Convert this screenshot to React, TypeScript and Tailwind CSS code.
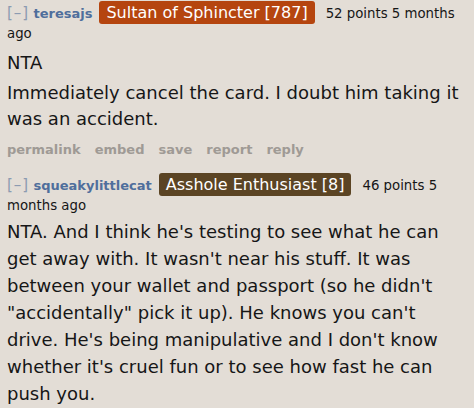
const font = { fontFamily: "Verdana, 'DejaVu Sans', sans-serif" }

type Comment = {
  user: string
  flair: string
  flairBg: string
  points: string
  body: string[]
  bodyClass: string
  links?: boolean
}

const comments: Comment[] = [
  {
    user: "teresajs",
    flair: "Sultan of Sphincter [787]",
    flairBg: "bg-[#b5450f]",
    points: "52 points 5 months ago",
    body: [
      "NTA",
      "Immediately cancel the card. I doubt him taking it was an accident."
    ],
    bodyClass: "mt-[6px] leading-[26px]",
    links: true
  },
  {
    user: "squeakylittlecat",
    flair: "Asshole Enthusiast [8]",
    flairBg: "bg-[#5b4424]",
    points: "46 points 5 months ago",
    body: [
      "NTA. And I think he's testing to see what he can get away with. It wasn't near his stuff. It was between your wallet and passport (so he didn't \"accidentally\" pick it up). He knows you can't drive. He's being manipulative and I don't know whether it's cruel fun or to see how fast he can push you."
    ],
    bodyClass: "mt-[2px] leading-[27px]"
  }
]

export default function App() {
  return (
    <div className="h-[408px] w-[474px] overflow-hidden bg-[#e3ddd6] pl-[7px] pr-[4px] pt-[3px] text-[#161616]" style={font}>
      {comments.map((c) => (
        <div key={c.user} className="mb-[16px]">
          <div className="text-[13.3px] leading-[20px]">
            <span className="text-[15px] tracking-[1px] text-[#8c9bb1]">[–]</span>{" "}
            <span className="text-[13px] font-bold text-[#4f6e9c]">{c.user}</span>
            <span className={`${c.flairBg} ml-[7px] rounded-[3px] px-[7px] py-[2px] text-[16px] text-white`}>
              {c.flair}
            </span>
            <span className="ml-[11px]">{c.points}</span>
          </div>
          <div className={`flex flex-col gap-[4px] text-[18px] ${c.bodyClass}`}>
            {c.body.map((p, i) => (
              <p key={i}>{p}</p>
            ))}
          </div>
          {c.links && (
            <div className="mt-[8px] flex gap-[14px] text-[13px] font-bold leading-[19px] text-[#9f9a95]">
              <span>permalink</span>
              <span>embed</span>
              <span>save</span>
              <span>report</span>
              <span>reply</span>
            </div>
          )}
        </div>
      ))}
    </div>
  )
}
